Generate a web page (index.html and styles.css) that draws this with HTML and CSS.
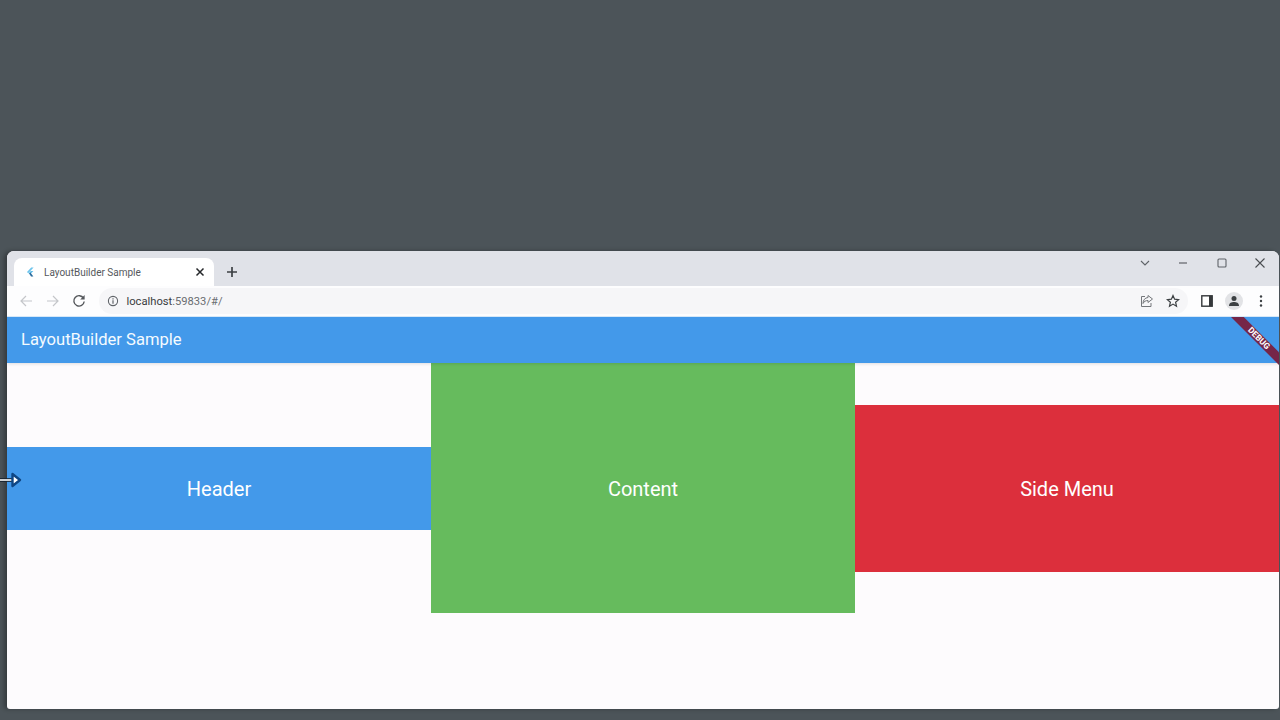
FILE: index.html
```html
<!DOCTYPE html>
<html lang="en">
<head>
<meta charset="UTF-8" />
<title>LayoutBuilder Sample</title>
<link rel="stylesheet" href="styles.css">
</head>
<body>

<div class="window">
  <!-- Tab strip -->
  <div class="tabstrip">
    <div class="tab">
      <svg class="favicon" viewBox="0 0 12 12" width="12" height="12">
        <path d="M7.2 1.5 L3 6 L4.2 7.2 L9.6 1.5 Z" fill="#6cc4ec"/>
        <path d="M4.6 7.2 L6.8 5 L9.4 5 L6 8.4 Z" fill="#62bce6"/>
        <path d="M5.2 7.6 L6.4 6.5 L9.4 10.4 L7 10.4 Z" fill="#2a6c9e"/>
      </svg>
      <span class="tab-title">LayoutBuilder Sample</span>
      <svg class="tab-close" viewBox="0 0 10 10" width="10" height="10">
        <path d="M1.5 1.5 L8.5 8.5 M8.5 1.5 L1.5 8.5" stroke="#26282b" stroke-width="1.5" fill="none"/>
      </svg>
    </div>
    <svg class="new-tab" viewBox="0 0 12 12" width="12" height="12">
      <path d="M6 1 V11 M1 6 H11" stroke="#3c4043" stroke-width="1.7" fill="none"/>
    </svg>
    <div class="window-controls">
      <svg viewBox="0 0 12 12" width="12" height="12">
        <path d="M2 4 L6 8 L10 4" stroke="#5f6368" stroke-width="1.1" fill="none"/>
      </svg>
      <svg viewBox="0 0 12 12" width="12" height="12">
        <path d="M2 6 H10" stroke="#5f6368" stroke-width="1.2" fill="none"/>
      </svg>
      <svg viewBox="0 0 12 12" width="12" height="12">
        <rect x="2" y="2" width="8" height="8" rx="1" stroke="#5f6368" stroke-width="1.1" fill="none"/>
      </svg>
      <svg viewBox="0 0 12 12" width="12" height="12">
        <path d="M1.5 1.5 L10.5 10.5 M10.5 1.5 L1.5 10.5" stroke="#4a4d51" stroke-width="1.1" fill="none"/>
      </svg>
    </div>
  </div>

  <!-- Toolbar -->
  <div class="toolbar">
    <svg class="nav" viewBox="0 0 14 14" width="14" height="14">
      <path d="M13 7 H2 M7 2 L2 7 L7 12" stroke="#c4c6ca" stroke-width="1.2" fill="none"/>
    </svg>
    <svg class="nav" viewBox="0 0 14 14" width="14" height="14">
      <path d="M1 7 H12 M7 2 L12 7 L7 12" stroke="#c4c6ca" stroke-width="1.2" fill="none"/>
    </svg>
    <svg class="nav" viewBox="0 0 14 14" width="14" height="14">
      <path d="M11.5 4.2 A5.2 5.2 0 1 0 12.2 7.5" stroke="#54575b" stroke-width="1.4" fill="none"/>
      <path d="M12.6 1 V5.4 H8.2 Z" fill="#54575b"/>
    </svg>
    <div class="omnibox">
      <svg class="info" viewBox="0 0 12 12" width="12" height="12">
        <circle cx="6" cy="6" r="4.6" stroke="#5f6368" stroke-width="1.1" fill="none"/>
        <path d="M6 5.2 V8.8 M6 3.2 V4.4" stroke="#5f6368" stroke-width="1.2" fill="none"/>
      </svg>
      <span class="url">localhost<span class="url-rest">:59833/#/</span></span>
      <svg class="omni-icon" viewBox="0 0 14 14" width="14" height="14">
        <path d="M8 1.5 L12.5 5 L8 8.5 V6.5 C5.5 6.5 4 7.5 3 9.5 C3 6 5 3.8 8 3.5 Z" stroke="#74777b" stroke-width="1" fill="none"/>
        <path d="M5 2.5 H1.5 V12.5 H11 V9" stroke="#74777b" stroke-width="1" fill="none"/>
      </svg>
      <svg class="omni-icon" viewBox="0 0 14 14" width="14" height="14">
        <path d="M7 1.5 L8.6 5.2 L12.6 5.6 L9.6 8.2 L10.5 12.2 L7 10.1 L3.5 12.2 L4.4 8.2 L1.4 5.6 L5.4 5.2 Z" stroke="#3c4043" stroke-width="1.2" fill="none"/>
      </svg>
    </div>
    <svg class="side-panel" viewBox="0 0 12 12" width="12" height="12">
      <rect x="0.8" y="0.8" width="10.4" height="10.4" stroke="#35383b" stroke-width="1.4" fill="#fff"/>
      <rect x="8" y="0.8" width="3.2" height="10.4" fill="#35383b"/>
    </svg>
    <div class="avatar">
      <svg viewBox="0 0 12 12" width="12" height="12">
        <circle cx="6" cy="3.6" r="2.5" fill="#3c4043"/>
        <path d="M1 11 C1 7.8 3.5 7 6 7 C8.5 7 11 7.8 11 11 Z" fill="#3c4043"/>
      </svg>
    </div>
    <svg class="menu-dots" viewBox="0 0 4 14" width="4" height="14">
      <circle cx="2" cy="2.5" r="1.2" fill="#3c4043"/>
      <circle cx="2" cy="7" r="1.2" fill="#3c4043"/>
      <circle cx="2" cy="11.5" r="1.2" fill="#3c4043"/>
    </svg>
  </div>

  <!-- Flutter app -->
  <div class="app">
    <div class="appbar">LayoutBuilder Sample</div>
    <div class="debug-banner">DEBUG</div>
    <div class="row">
      <div class="box box-header">Header</div>
      <div class="box box-content">Content</div>
      <div class="box box-side">Side Menu</div>
    </div>
  </div>
</div>

<svg class="cursor" viewBox="0 0 22 16" width="22" height="16">
  <path d="M0 8 H13" stroke="#14202c" stroke-width="3.6" fill="none"/>
  <path d="M0 8 H14" stroke="#fff" stroke-width="1.6" fill="none"/>
  <path d="M12.5 2 L20 8 L12.5 14 Z" fill="#fff" stroke="#0f4684" stroke-width="2.4" stroke-linejoin="round"/>
</svg>

</body>
</html>
```

FILE: styles.css
```css
/* Reset & base */
html, body {
  margin: 0;
  padding: 0;
  height: 100%;
  overflow: hidden;
  background: #4c5459;
  font-family: Roboto, "Liberation Sans", sans-serif;
}

body {
  padding: 251px 1px 11px 7px;
  box-sizing: border-box;
  position: relative;
}

/* Browser window */
.window {
  height: 458px;
  background: #fdfbfd;
  border-radius: 7px 7px 3px 3px;
  overflow: hidden;
  display: flex;
  flex-direction: column;
  box-shadow: -3px 0 4px rgba(0, 0, 0, 0.3);
}

/* Tab strip */
.tabstrip {
  height: 35px;
  flex: none;
  background: #e0e2e8;
  display: flex;
  align-items: flex-end;
}

.tab {
  width: 200px;
  height: 28px;
  margin-left: 7px;
  background: #fff;
  border-radius: 8px 8px 0 0;
  display: flex;
  align-items: center;
  padding: 0 9px 0 10px;
  box-sizing: border-box;
}

.favicon {
  flex: none;
  margin-right: 8px;
}

.tab-title {
  flex: 1;
  font-size: 10px;
  color: #55585c;
}

.new-tab {
  margin: 0 0 8px 12px;
}

.window-controls {
  margin-left: auto;
  align-self: center;
  display: flex;
  align-items: center;
  gap: 26.5px;
  padding-right: 13px;
  margin-top: -11px;
}

/* Toolbar */
.toolbar {
  height: 30px;
  flex: none;
  background: #fdfdfe;
  border-bottom: 1px solid #d6e8f8;
  display: flex;
  align-items: center;
  padding: 0 16px 0 12px;
}

.nav {
  flex: none;
  margin-right: 12.5px;
}

.omnibox {
  flex: 1;
  height: 26px;
  margin-right: 13px;
  padding: 0 8px;
  background: #f6f6f8;
  border-radius: 13px;
  display: flex;
  align-items: center;
  box-sizing: border-box;
}

.info {
  flex: none;
  margin-right: 8px;
}

.url {
  flex: 1;
  font-size: 11.2px;
  color: #3a3c40;
}

.url-rest {
  color: #6a6d71;
}

.omni-icon {
  flex: none;
  margin-left: 12px;
}

.side-panel {
  flex: none;
  margin-right: 12px;
}

.avatar {
  flex: none;
  width: 18px;
  height: 18px;
  border-radius: 50%;
  background: #e2e3e6;
  display: flex;
  align-items: center;
  justify-content: center;
  margin-right: 16px;
}

.menu-dots {
  flex: none;
}

/* App */
.app {
  flex: 1;
  position: relative;
  overflow: hidden;
}

.appbar {
  height: 46px;
  background: #4399ea;
  color: #f4fbff;
  font-size: 16.6px;
  padding-left: 14px;
  line-height: 46px;
  box-shadow: 0 1px 3px rgba(0, 0, 0, 0.12);
  position: relative;
}

.debug-banner {
  position: absolute;
  top: 17px;
  right: -22px;
  width: 84px;
  height: 8.5px;
  line-height: 8.5px;
  background: #762648;
  color: #fff;
  font-size: 8.5px;
  font-weight: 700;
  text-align: center;
  transform: rotate(45deg);
}

.row {
  display: flex;
  align-items: center;
}

.box {
  flex: 1;
  box-sizing: border-box;
  padding-top: 1px;
  color: #fff;
  font-size: 20px;
  display: flex;
  align-items: center;
  justify-content: center;
}

.box-header {
  height: 83px;
  background: #4399ea;
}

.box-content {
  height: 250px;
  background: #66bb5d;
}

.box-side {
  height: 167px;
  background: #dc2f3c;
}

/* Mouse pointer, drawn over the window edge */
.cursor {
  position: absolute;
  left: 0;
  top: 472px;
}
```
